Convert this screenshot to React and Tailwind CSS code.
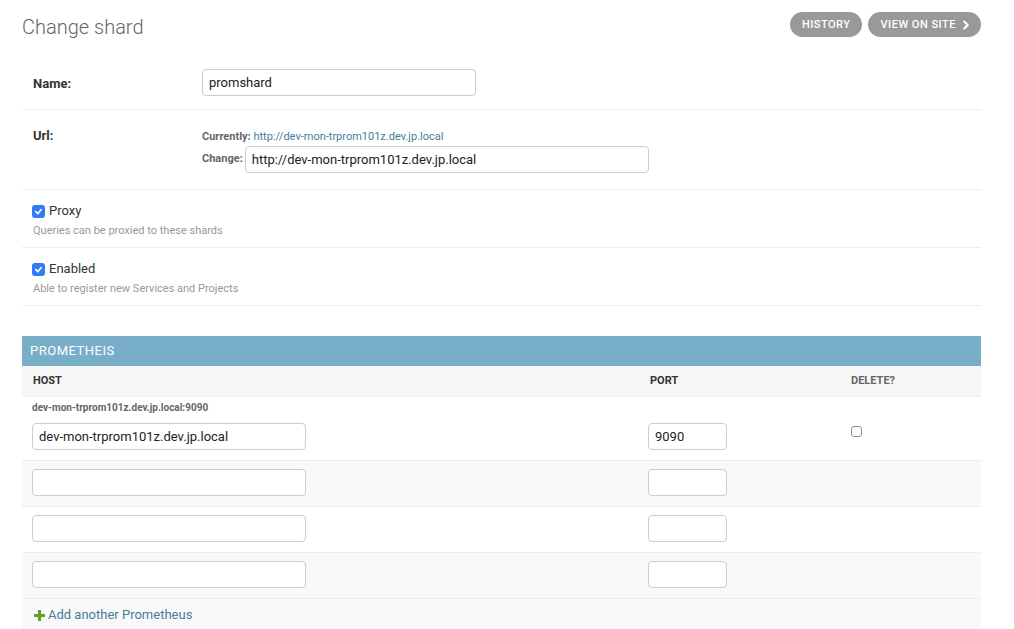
import { ChevronRight } from 'lucide-react'

function Checkbox({ checked }) {
  if (checked) {
    return (
      <span className="inline-flex items-center justify-center w-[13px] h-[13px] rounded-[3px] bg-[#2f7cf6]">
        <svg width="9" height="9" viewBox="0 0 10 10">
          <polyline points="2,5.2 4.2,7.4 8,2.8" fill="none" stroke="#fff" strokeWidth="1.8" strokeLinecap="round" strokeLinejoin="round" />
        </svg>
      </span>
    )
  }
  return <span className="block w-[11px] h-[11px] rounded-[3px] border border-[#8f8f8f] bg-white" />
}

function TextInput({ value, className }) {
  return (
    <div className={`h-[27px] border border-[#ccc] rounded-[4px] bg-white px-[6px] flex items-center text-[13px] text-[#222] ${className}`}>
      {value}
    </div>
  )
}

function InlineRow({ host, port, original, striped, deletable }) {
  return (
    <div className={`grid grid-cols-[616px_203px_1fr] border-b border-[#eee] ${striped ? 'bg-[#f9f9f9]' : 'bg-white'}`}>
      <div className={`pl-[10px] ${original ? 'pt-[5px] pb-[10px]' : 'pt-[8px] pb-[10px]'}`}>
        {original && (
          <p className="text-[10px] leading-[12px] font-bold text-[#666] mb-[9px]">{original}</p>
        )}
        <TextInput value={host} className="w-[274px]" />
      </div>
      <div className={`pl-[10px] ${original ? 'pt-[26px]' : 'pt-[8px]'}`}>
        <TextInput value={port} className="w-[79px]" />
      </div>
      <div className={`pl-[10px] ${original ? 'pt-[29px]' : 'pt-[8px]'}`}>
        {deletable && <Checkbox />}
      </div>
    </div>
  )
}

export default function App() {
  return (
    <div className="min-h-screen bg-white [font-family:Roboto,'Lucida_Grande',Verdana,sans-serif] text-[#333] pl-[22px] pr-[33px]">
      <div className="flex items-start justify-between pt-[12px]">
        <h1 className="mt-[3px] text-[20px] leading-[24px] font-light text-[#666]">Change shard</h1>
        <div className="flex gap-[6px]">
          <a className="h-[25px] px-[12px] rounded-full bg-[#999] text-white text-[11px] font-medium tracking-[0.5px] flex items-center pt-[1px]">
            HISTORY
          </a>
          <a className="h-[25px] pl-[12px] pr-[8px] rounded-full bg-[#999] text-white text-[11px] font-medium tracking-[0.5px] flex items-center gap-[3px] pt-[1px]">
            VIEW ON SITE
            <ChevronRight size={14} strokeWidth={3.5} />
          </a>
        </div>
      </div>

      <div className="mt-[20px]">
        <div className="flex items-center border-b border-[#eee] pt-[10px] pb-[13px] pl-[11px]">
          <label className="w-[169px] text-[13px] font-bold text-[#333] pt-[3px]">Name:</label>
          <TextInput value="promshard" className="w-[274px]" />
        </div>

        <div className="flex border-b border-[#eee] pt-[19px] pb-[16px] pl-[11px]">
          <label className="w-[169px] text-[13px] leading-[16px] font-bold text-[#333] -mt-[1px]">Url:</label>
          <div className="flex flex-col gap-[1px]">
            <div className="text-[11px] leading-[16px]">
              <span className="font-bold text-[#666]">Currently:</span>{' '}
              <a className="text-[#447e9b]">http://dev-mon-trprom101z.dev.jp.local</a>
            </div>
            <div className="flex items-center gap-[2px]">
              <span className="text-[11px] font-bold text-[#666]">Change:</span>
              <TextInput value="http://dev-mon-trprom101z.dev.jp.local" className="w-[404px]" />
            </div>
          </div>
        </div>

        {[
          ['Proxy', 'Queries can be proxied to these shards'],
          ['Enabled', 'Able to register new Services and Projects'],
        ].map(([label, help]) => (
          <div key={label} className="border-b border-[#eee] pt-[13px] pb-[9px] pl-[10px]">
            <div className="flex items-center gap-[4px] h-[16px]">
              <Checkbox checked />
              <span className="text-[13px] text-[#333]">{label}</span>
            </div>
            <p className="mt-[5px] pl-[1px] text-[11px] leading-[14px] text-[#999]">{help}</p>
          </div>
        ))}
      </div>

      <div className="mt-[30px]">
        <h2 className="h-[30px] bg-[#79aec8] text-white text-[13px] tracking-[0.5px] px-[8px] flex items-center">
          PROMETHEIS
        </h2>
        <div className="grid grid-cols-[616px_203px_1fr] h-[31px] bg-[#f6f6f6] border-b border-[#eee] text-[11px] font-bold items-center pt-[1px]">
          <span className="pl-[11px] text-[#333]">HOST</span>
          <span className="pl-[12px] text-[#333]">PORT</span>
          <span className="pl-[10px] text-[#666]">DELETE?</span>
        </div>
        <InlineRow host="dev-mon-trprom101z.dev.jp.local" port="9090" original="dev-mon-trprom101z.dev.jp.local:9090" deletable />
        <InlineRow striped />
        <InlineRow />
        <InlineRow striped />
        <div className="bg-[#f9f9f9] h-[31px] pl-[12px] flex items-center gap-[3px] pt-[1px]">
          <svg width="11" height="11" viewBox="0 0 12 12">
            <rect x="4.3" y="0" width="3.4" height="12" fill="#5fa22b" />
            <rect x="0" y="4.3" width="12" height="3.4" fill="#5fa22b" />
          </svg>
          <a className="text-[13px] text-[#447e9b]">Add another Prometheus</a>
        </div>
      </div>
    </div>
  )
}
